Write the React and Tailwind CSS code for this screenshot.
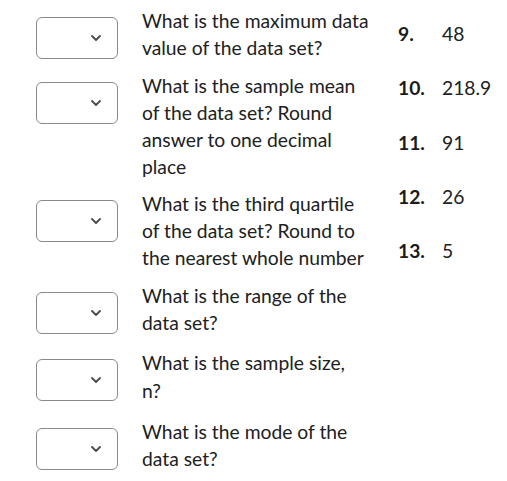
import React from "react";

const questions = [
  { lines: ["What is the maximum data", "value of the data set?"], mt: "mt-0" },
  {
    lines: ["What is the sample mean", "of the data set? Round", "answer to one decimal", "place"],
    mt: "mt-[10px]",
  },
  {
    lines: ["What is the third quartile", "of the data set? Round to", "the nearest whole number"],
    mt: "mt-[9px]",
  },
  { lines: ["What is the range of the", "data set?"], mt: "mt-[10px]" },
  { lines: ["What is the sample size,", "n?"], mt: "mt-[13px]" },
  { lines: ["What is the mode of the", "data set?"], mt: "mt-[14px]" },
];

const answers = [
  { n: "9.", v: "48" },
  { n: "10.", v: "218.9" },
  { n: "11.", v: "91" },
  { n: "12.", v: "26" },
  { n: "13.", v: "5" },
];

function SelectBox() {
  return (
    <div className="mt-[10px] flex h-[42px] w-[82px] shrink-0 items-center justify-end rounded-[6px] border border-[#8a8a8a] bg-white pr-[16px]">
      <svg width="10" height="6" viewBox="0 0 10 6" fill="none">
        <path d="M1 1L5 5L9 1" stroke="#494c4e" strokeWidth="1.8" strokeLinecap="round" strokeLinejoin="round" />
      </svg>
    </div>
  );
}

export default function App() {
  return (
    <div
      className="flex h-[481px] w-[507px] bg-white text-[19.3px] leading-[27.3px] text-[#202122]"
      style={{ fontFamily: "Lato, 'Noto Sans', sans-serif" }}
    >
      {/* Questions with dropdowns */}
      <div className="flex w-[373px] shrink-0 flex-col pl-[36px] pt-[7px]">
        {questions.map((q, i) => (
          <div key={i} className={`flex items-start gap-[24px] ${q.mt}`}>
            <SelectBox />
            <p className="whitespace-nowrap">
              {q.lines.map((l, j) => (
                <React.Fragment key={j}>
                  {l}
                  {j < q.lines.length - 1 && <br />}
                </React.Fragment>
              ))}
            </p>
          </div>
        ))}
      </div>

      {/* Answer list */}
      <div className="ml-[25px] flex flex-col gap-[27px] pt-[20px]">
        {answers.map((a) => (
          <div key={a.n} className="flex">
            <span className="w-[44px] font-bold text-[#1b1b1b]">{a.n}</span>
            <span>{a.v}</span>
          </div>
        ))}
      </div>
    </div>
  );
}
